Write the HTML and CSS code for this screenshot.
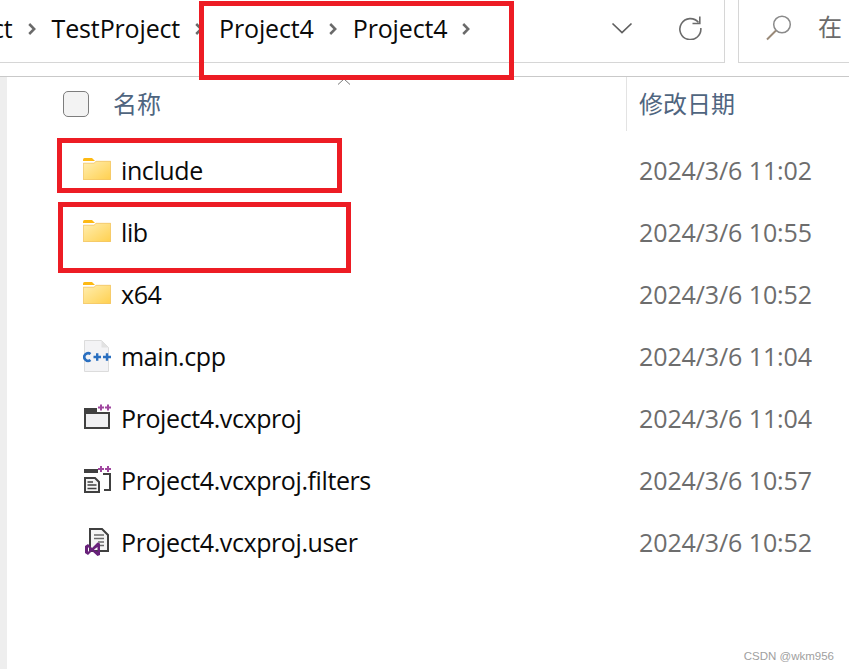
FILE: index.html
```html
<!DOCTYPE html>
<html lang="en">
<head>
    <meta charset="UTF-8">
    <meta name="viewport" content="width=device-width, initial-scale=1.0">
    <title>Project4</title>
    <link rel="stylesheet" href="styles.css">
</head>
<body>
    <svg class="defs" width="0" height="0">
        <defs>
            <linearGradient id="folderFill" x1="0" y1="0" x2="1" y2="1">
                <stop offset="0" stop-color="#ffeeb0"/>
                <stop offset="1" stop-color="#ffd04f"/>
            </linearGradient>
            <symbol id="folder" viewBox="0 0 28 22">
                <path d="M0 1.500Q0 0 1.500 0H9l3 3H0z" fill="#fdb913"/>
                <path d="M.3 5.200H11L13 3.300H27.700V21.700H.3z" fill="url(#folderFill)" stroke="#ecb440" stroke-width=".6"/>
            </symbol>
            <symbol id="chevron" viewBox="0 0 8 12">
                <path d="M1.200 1L6.200 6L1.200 11" fill="none" stroke="#6a6a6a" stroke-width="2.500"/>
            </symbol>
        </defs>
    </svg>

    <div class="window">
        <header class="toolbar">
            <nav class="address">
                <span class="crumb">ct</span>
                <svg class="sep"><use href="#chevron"/></svg>
                <span class="crumb">TestProject</span>
                <svg class="sep"><use href="#chevron"/></svg>
                <span class="crumb">Project4</span>
                <svg class="sep"><use href="#chevron"/></svg>
                <span class="crumb">Project4</span>
                <svg class="sep"><use href="#chevron"/></svg>
                <span class="spacer"></span>
                <svg class="tool-icon" width="22" height="12" viewBox="0 0 22 12">
                    <path d="M1.500 1.500L11 10.500L20.500 1.500" fill="none" stroke="#5f5f5f" stroke-width="1.700"/>
                </svg>
                <svg class="tool-icon refresh" width="24" height="24" viewBox="0 0 24 24">
                    <path d="M20.500 6.500A10.500 10.500 0 1 0 22.800 12" fill="none" stroke="#6b6b6b" stroke-width="1.600"/>
                    <path d="M14.500 7.500H21.800V.5" fill="none" stroke="#6b6b6b" stroke-width="1.600"/>
                </svg>
            </nav>
            <div class="search">
                <svg width="26" height="26" viewBox="0 0 26 26">
                    <circle cx="16" cy="9.500" r="8.300" fill="none" stroke="#8a8a8a" stroke-width="1.500"/>
                    <path d="M10 15.500L1 24.500" stroke="#9a8a78" stroke-width="2"/>
                </svg>
                <span class="search-text">在</span>
            </div>
        </header>

        <main class="content">
            <div class="rail"></div>
            <section class="files">
                <div class="head">
                    <span class="check"></span>
                    <span class="col-name">名称</span>
                    <svg class="sort" width="14" height="7" viewBox="0 0 14 7">
                        <path d="M1 6.500L7 1L13 6.500" fill="none" stroke="#777" stroke-width="1"/>
                    </svg>
                    <span class="col-date">修改日期</span>
                </div>

                <div class="list">
                    <div class="row">
                        <svg class="icon" viewBox="0 0 28 22"><use href="#folder"/></svg>
                        <span class="name">include</span>
                        <span class="date">2024/3/6 11:02</span>
                    </div>
                    <div class="row">
                        <svg class="icon" viewBox="0 0 28 22"><use href="#folder"/></svg>
                        <span class="name">lib</span>
                        <span class="date">2024/3/6 10:55</span>
                    </div>
                    <div class="row">
                        <svg class="icon" viewBox="0 0 28 22"><use href="#folder"/></svg>
                        <span class="name">x64</span>
                        <span class="date">2024/3/6 10:52</span>
                    </div>
                    <div class="row">
                        <svg class="icon tall" viewBox="0 0 28 32">
                            <path d="M1.500 .5H18.500L25.500 7.500V31.500H1.500z" fill="#f3f3f5" stroke="#dcdcdc"/>
                            <path d="M18.500 .5V7.500H25.500z" fill="#e2e2e2"/>
                            <path d="M7.500 14A3.800 3.800 0 1 0 7.500 20" fill="none" stroke="#2a6fc0" stroke-width="2.600"/>
                            <path d="M10.500 17H18M14.200 13.200V20.800M20 17H28M24 13.200V20.800" stroke="#2a6fc0" stroke-width="2.400"/>
                        </svg>
                        <span class="name">main.cpp</span>
                        <span class="date">2024/3/6 11:04</span>
                    </div>
                    <div class="row">
                        <svg class="icon tall" viewBox="0 0 28 32">
                            <path d="M2 11H26V26H2z" fill="#f0f0f2" stroke="#404040" stroke-width="2"/>
                            <path d="M1 6H14V11H1z" fill="#404040"/>
                            <path d="M15 5.500H21M18 2.500V8.500M22 5.500H28M25 2.500V8.500" stroke="#a0479f" stroke-width="2"/>
                        </svg>
                        <span class="name">Project4.vcxproj</span>
                        <span class="date">2024/3/6 11:04</span>
                    </div>
                    <div class="row">
                        <svg class="icon tall" viewBox="0 0 28 32">
                            <path d="M1 5H15V9H1z" fill="#404040"/>
                            <path d="M20 10H27V26H21" fill="none" stroke="#404040" stroke-width="2"/>
                            <path d="M2 14H12L16 18V28H2z" fill="#f4f4f4" stroke="#404040" stroke-width="2"/>
                            <path d="M4.500 18H10M4.500 21H13.500M4.500 24.500H13.500" stroke="#404040" stroke-width="1.700"/>
                            <path d="M15 5H21M18 2V8M22 5H28M25 2V8" stroke="#a0479f" stroke-width="2"/>
                        </svg>
                        <span class="name">Project4.vcxproj.filters</span>
                        <span class="date">2024/3/6 10:57</span>
                    </div>
                    <div class="row">
                        <svg class="icon tall" viewBox="0 0 28 32">
                            <path d="M7 3H19L25 9V25H7z" fill="#f4f4f4" stroke="#404040" stroke-width="2"/>
                            <path d="M11 9H21M11 12.500H21M15 16H21M15 19.500H21" stroke="#6a6a6a" stroke-width="1.400"/>
                            <path d="M2 20L5 18L9 22L14.500 16.500L17 17.500V29L14.500 30L9 25L5 29L2 27zM5 21V26L7 23.500zM11 23.500L14.500 26V21z" fill="#68217a" fill-rule="evenodd"/>
                        </svg>
                        <span class="name">Project4.vcxproj.user</span>
                        <span class="date">2024/3/6 10:52</span>
                    </div>
                </div>
            </section>
        </main>

        <div class="mark mark-path"></div>
        <div class="mark mark-include"></div>
        <div class="mark mark-lib"></div>
        <div class="watermark">CSDN @wkm956</div>
    </div>
</body>
</html>
```

FILE: styles.css
```css
body {
    margin: 0;
    background: #fff;
    font-family: "Open Sans", "Noto Sans CJK SC", sans-serif;
}
.defs {
    position: absolute;
}
.window {
    position: relative;
    width: 849px;
    height: 669px;
    overflow: hidden;
}
.toolbar {
    display: flex;
    gap: 13px;
    height: 77px;
    box-sizing: border-box;
    border-bottom: 1px solid #c9c9c9;
}
.address {
    display: flex;
    align-items: center;
    width: 733px;
    height: 63px;
    box-sizing: border-box;
    margin-left: -8px;
    padding-bottom: 7px;
    padding-right: 22px;
    border-right: 1px solid #d6d6d6;
    border-bottom: 1px solid #d6d6d6;
}
.crumb {
    font-size: 25px;
    letter-spacing: -0.15px;
    color: #0a0a0a;
}
.sep {
    width: 8px;
    height: 12px;
    margin: 3px 16px 0 15px;
}
.spacer {
    flex: 1;
}
.tool-icon {
    flex: none;
}
.refresh {
    margin-left: 45px;
}
.search {
    flex: 1;
    display: flex;
    align-items: center;
    gap: 26px;
    height: 63px;
    box-sizing: border-box;
    padding: 0 0 7px 27px;
    border-left: 1px solid #d6d6d6;
    border-bottom: 1px solid #d6d6d6;
}
.search-text {
    margin-top: -4px;
    font-size: 24px;
    color: #6b6b6b;
}
.content {
    display: flex;
    height: 592px;
}
.rail {
    width: 7px;
    background: #eeeeee;
    border-right: 4px solid #fff;
    box-shadow: 11px 0 0 -10px #f4f4f4;
}
.files {
    flex: 1;
}
.head {
    position: relative;
    display: flex;
    align-items: center;
    height: 54px;
    padding-left: 52px;
}
.check {
    width: 24px;
    height: 24px;
    margin-top: -1px;
    background: #f3f3f3;
    border: 1px solid #7d7d7d;
    border-radius: 5px;
}
.col-name {
    margin-left: 24px;
    margin-top: -4px;
    width: 513px;
    font-size: 24px;
    color: #4f6580;
}
.col-date {
    align-self: stretch;
    display: flex;
    align-items: center;
    padding: 0 0 4px 12px;
    border-left: 1px solid #e3e3e3;
    font-size: 24px;
    color: #4f6580;
}
.sort {
    position: absolute;
    left: 326px;
    top: 1px;
}
.list {
    padding-top: 8px;
}
.row {
    display: flex;
    align-items: center;
    height: 62px;
    padding-left: 72px;
}
.icon {
    width: 28px;
    height: 22px;
    margin-bottom: 2px;
}
.icon.tall {
    height: 32px;
    margin-bottom: 0;
}
.name {
    width: 518px;
    margin-left: 10px;
    font-size: 25px;
    letter-spacing: -0.4px;
    color: #0a0a0a;
}
.date {
    font-size: 25px;
    letter-spacing: -0.1px;
    color: #6d6d6d;
}
.mark {
    position: absolute;
    box-sizing: border-box;
    border: 5px solid #ed1c24;
}
.mark-path {
    left: 199px;
    top: 1px;
    width: 315px;
    height: 79px;
}
.mark-include {
    left: 57px;
    top: 138px;
    width: 285px;
    height: 55px;
}
.mark-lib {
    left: 58px;
    top: 202px;
    width: 293px;
    height: 71px;
}
.watermark {
    position: absolute;
    right: 15px;
    bottom: 7px;
    font-family: "Liberation Sans", sans-serif;
    font-size: 11.500px;
    color: #a0a0a0;
}
```
